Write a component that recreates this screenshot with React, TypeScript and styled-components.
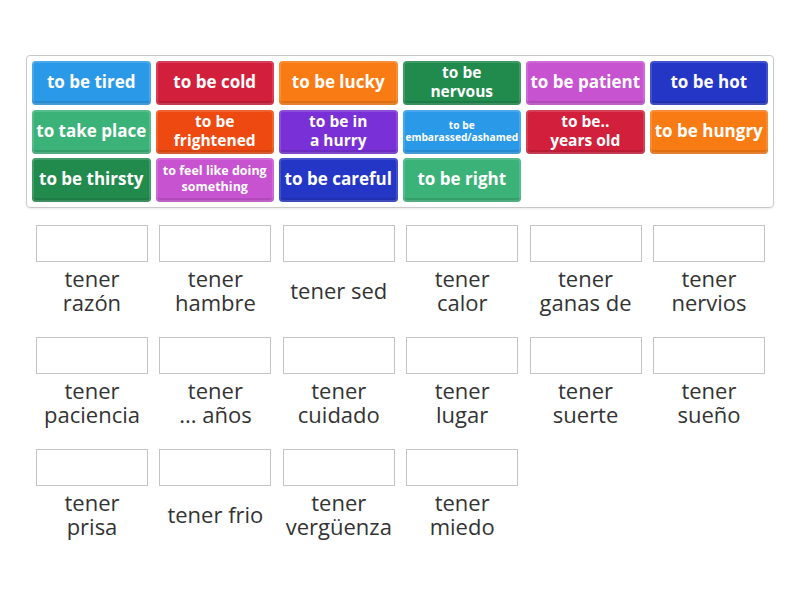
import styled, { createGlobalStyle } from "styled-components";

const GlobalStyle = createGlobalStyle`
  body {
    margin: 0;
    background: #ffffff;
    font-family: "Open Sans", "Liberation Sans", sans-serif;
  }
`;

// palette
const colors: Record<string, string> = {
  blue: "#2a9ae8",
  red: "#d21f3b",
  orange: "#f97b14",
  forest: "#218b4d",
  pink: "#c753d1",
  navy: "#2436c6",
  mint: "#3bb278",
  flame: "#ef4912",
  violet: "#7930d7",
};

// styled
const Page = styled.div`
  width: 800px;
  height: 600px;
  padding-top: 55px;
  box-sizing: border-box;
`;

const Bank = styled.div`
  margin-left: 26px;
  width: 748px;
  box-sizing: border-box;
  border: 1px solid #c9c9c9;
  border-radius: 4px;
  padding: 5px;
  display: grid;
  grid-template-columns: repeat(6, 1fr);
  grid-auto-rows: 44px;
  column-gap: 5px;
  row-gap: 4.5px;
  box-shadow: 0 1px 2px rgba(0, 0, 0, 0.08);
`;

const Tile = styled.div<{ $color: string; $size: number; $lh: number }>`
  display: flex;
  align-items: center;
  justify-content: center;
  text-align: center;
  border-radius: 4px;
  background: ${(p) => p.$color};
  box-shadow: inset 0 0 0 2px rgba(255, 255, 255, 0.14),
    inset 0 -4px 0 rgba(0, 0, 0, 0.1);
  color: #ffffff;
  font-weight: 700;
  font-size: ${(p) => p.$size}px;
  line-height: ${(p) => p.$lh}px;
  white-space: nowrap;
  padding-bottom: 2px;
  box-sizing: border-box;
`;

const Targets = styled.div`
  margin: 17px 0 0 36px;
  width: 729px;
  display: grid;
  grid-template-columns: repeat(6, 112px);
  column-gap: 11.4px;
  row-gap: 23px;
`;

const Cell = styled.div`
  display: flex;
  flex-direction: column;
  align-items: center;
`;

const Slot = styled.div`
  width: 112px;
  height: 37px;
  box-sizing: border-box;
  border: 1px solid #c4c4c4;
  background: #ffffff;
`;

const Label = styled.div`
  margin-top: 4px;
  height: 48px;
  display: flex;
  align-items: center;
  justify-content: center;
  text-align: center;
  color: #333333;
  font-size: 22px;
  line-height: 24px;
  white-space: nowrap;
`;

// data
const tiles: { text: string[]; color: string; size?: number; lh?: number }[] = [
  { text: ["to be tired"], color: "blue" },
  { text: ["to be cold"], color: "red" },
  { text: ["to be lucky"], color: "orange" },
  { text: ["to be", "nervous"], color: "forest", size: 15.5, lh: 19 },
  { text: ["to be patient"], color: "pink" },
  { text: ["to be hot"], color: "navy" },
  { text: ["to take place"], color: "mint" },
  { text: ["to be", "frightened"], color: "flame", size: 15.5, lh: 19 },
  { text: ["to be in", "a hurry"], color: "violet", size: 15.5, lh: 19 },
  { text: ["to be", "embarassed/ashamed"], color: "blue", size: 10.2, lh: 12 },
  { text: ["to be..", "years old"], color: "red", size: 15.5, lh: 19 },
  { text: ["to be hungry"], color: "orange" },
  { text: ["to be thirsty"], color: "forest" },
  { text: ["to feel like doing", "something"], color: "pink", size: 12.5, lh: 16 },
  { text: ["to be careful"], color: "navy" },
  { text: ["to be right"], color: "mint" },
];

const labels: string[][] = [
  ["tener", "razón"],
  ["tener", "hambre"],
  ["tener sed"],
  ["tener", "calor"],
  ["tener", "ganas de"],
  ["tener", "nervios"],
  ["tener", "paciencia"],
  ["tener", "... años"],
  ["tener", "cuidado"],
  ["tener", "lugar"],
  ["tener", "suerte"],
  ["tener", "sueño"],
  ["tener", "prisa"],
  ["tener frio"],
  ["tener", "vergüenza"],
  ["tener", "miedo"],
];

const Lines = ({ lines }: { lines: string[] }) => (
  <span>
    {lines.map((l, i) => (
      <span key={i}>
        {i > 0 && <br />}
        {l}
      </span>
    ))}
  </span>
);

// Main
const App = () => {
  return (
    <>
      <GlobalStyle />
      <Page>
        <Bank>
          {tiles.map((t, i) => (
            <Tile
              key={i}
              $color={colors[t.color]}
              $size={t.size ?? 17}
              $lh={t.lh ?? 22}
            >
              <Lines lines={t.text} />
            </Tile>
          ))}
        </Bank>

        <Targets>
          {labels.map((l, i) => (
            <Cell key={i}>
              <Slot />
              <Label>
                <Lines lines={l} />
              </Label>
            </Cell>
          ))}
        </Targets>
      </Page>
    </>
  );
};

export default App;
